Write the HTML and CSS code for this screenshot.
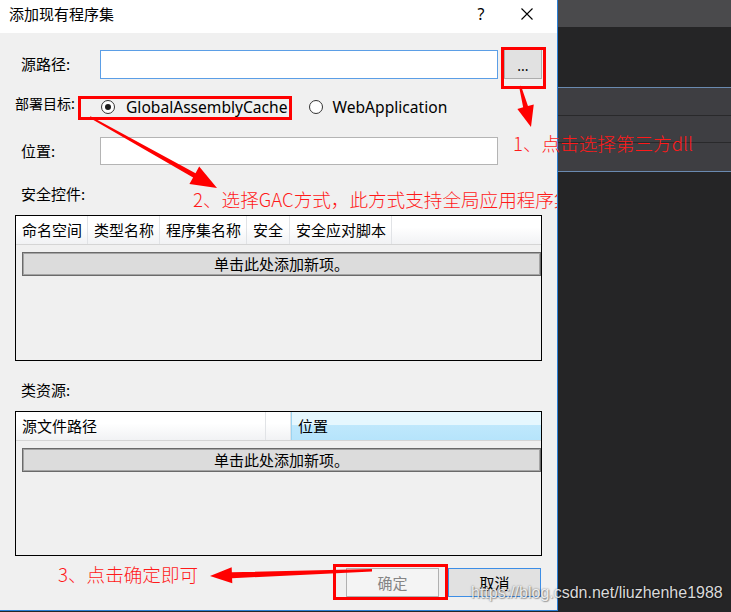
FILE: index.html
```html
<!DOCTYPE html>
<html lang="zh-CN">
<head>
  <meta charset="UTF-8" />
  <title>添加现有程序集</title>
  <link rel="stylesheet" href="styles.css">
</head>
<body>
  <div class="screen">

    <!-- 对话框 -->
    <div class="dialog">
      <div class="title-bar">
        <span class="title">添加现有程序集</span>
        <span class="title-help">?</span>
        <span class="title-close">
          <svg width="12" height="12" viewBox="0 0 12 12">
            <path d="M0.5 0.5 L11.5 11.5 M11.5 0.5 L0.5 11.5" stroke="#000" stroke-width="1.1" fill="none"/>
          </svg>
        </span>
      </div>

      <div class="dialog-body">
        <div class="form-row row-path">
          <label class="label">源路径:</label>
          <input class="text-input" type="text">
          <button class="browse-button">...</button>
        </div>

        <div class="form-row row-target">
          <label class="label label-target">部署目标:</label>
          <div class="radio-group">
            <span class="radio checked"></span>
            <span class="radio-text">GlobalAssemblyCache</span>
            <span class="radio radio-second"></span>
            <span class="radio-text radio-text-second">WebApplication</span>
          </div>
        </div>

        <div class="form-row row-location">
          <label class="label">位置:</label>
          <input class="text-input" type="text">
        </div>

        <!-- 安全控件 -->
        <div class="section-label">安全控件:</div>
        <div class="grid-box">
          <div class="grid-header">
            <div class="col-head col-ns">命名空间</div>
            <div class="col-head col-type">类型名称</div>
            <div class="col-head col-asm">程序集名称</div>
            <div class="col-head col-safe">安全</div>
            <div class="col-head col-script">安全应对脚本</div>
            <div class="col-head col-fill"></div>
          </div>
          <div class="add-row">单击此处添加新项。</div>
        </div>

        <!-- 类资源 -->
        <div class="section-label">类资源:</div>
        <div class="grid-box grid-resources">
          <div class="grid-header">
            <div class="col-head col-src">源文件路径</div>
            <div class="col-head col-gap"></div>
            <div class="col-head col-fill col-active">位置</div>
          </div>
          <div class="add-row">单击此处添加新项。</div>
        </div>

        <div class="button-row">
          <button class="dialog-button btn-ok">确定</button>
          <button class="dialog-button btn-cancel">取消</button>
        </div>
      </div>

      <div class="note note-2">2、选择GAC方式，此方式支持全局应用程序集</div>
    </div>

    <!-- 右侧背景窗口 -->
    <div class="side">
      <div class="side-tab"></div>
      <div class="side-space"></div>
      <div class="side-list">
        <div class="side-row side-row-first"></div>
        <div class="side-row side-row-mid"></div>
        <div class="side-row side-row-last"></div>
      </div>
    </div>

    <!-- 标注 -->
    <div class="mark-box mark-path"></div>
    <div class="mark-box mark-radio"></div>
    <div class="mark-box mark-ok"></div>

    <svg class="arrows" width="731" height="612" viewBox="0 0 731 612">
      <polygon fill="#ff0000" points="519.03,86.26 523.15,107.36 517.35,108.91 531,127 533.77,104.51 527.98,106.06 520.97,85.74"/>
      <polygon fill="#ff0000" points="89.51,117.87 193.08,177.49 189.42,184.04 217,188 199.18,166.58 195.52,173.13 90.49,116.13"/>
      <polygon fill="#ff0000" points="371.93,569 231.87,572.19 231.68,567.2 210,576 232.28,583.18 232.09,578.19 372.07,571.5"/>
    </svg>

    <div class="note note-1">1、点击选择第三方dll</div>
    <div class="note note-3">3、点击确定即可</div>

    <div class="watermark">https://blog.csdn.net/liuzhenhe1988</div>
  </div>
</body>
</html>
```

FILE: styles.css
```css
body {
  margin: 0;
  background: #252526;
  font-family: "Noto Sans", "Noto Sans CJK SC", sans-serif;
  color: #000;
}
.screen {
  position: relative;
  display: flex;
  width: 731px;
  height: 612px;
  overflow: hidden;
}

/* 对话框 */
.dialog {
  position: relative;
  flex: none;
  width: 557px;
  height: 610px;
  border-right: 1px solid #2c7fd4;
  border-bottom: 1px solid #2c7fd4;
  background: #f0f0f0;
  overflow: hidden;
}
.title-bar {
  display: flex;
  align-items: flex-start;
  height: 33px;
  box-sizing: border-box;
  padding: 4px 7px 0 9px;
  background: #fff;
}
.title {
  flex: 1;
  font-family: "Noto Sans CJK SC", sans-serif;
  font-size: 15px;
  line-height: 20px;
}
.title-help {
  width: 46px;
  text-align: center;
  font-size: 16px;
  line-height: 20px;
}
.title-close {
  display: flex;
  align-items: center;
  justify-content: center;
  width: 46px;
  height: 20px;
}

.dialog-body { padding: 16px 15px 0 15px; }
.form-row { display: flex; align-items: flex-start; }
.label {
  flex: none;
  width: 85px;
  box-sizing: border-box;
  padding-left: 6px;
  font-family: "Noto Sans CJK SC", sans-serif;
  font-size: 15px;
}
.text-input {
  box-sizing: border-box;
  width: 398px;
  margin: 0;
  padding: 0 3px;
  border: 1px solid #b4b4b4;
  background: #fff;
  font: inherit;
  outline: none;
}
.row-path { height: 30px; }
.row-path .label { line-height: 30px; }
.row-path .text-input {
  height: 29px;
  margin-top: 1px;
  border-color: #5b9ee6;
}
.browse-button {
  width: 38px;
  height: 30px;
  margin-left: 6px;
  padding: 4px 0 0;
  border: 1px solid #adadad;
  background: #e1e1e1;
  font-family: "Noto Sans", sans-serif;
  font-size: 14px;
  line-height: 1;
}

.row-target { height: 24px; margin-top: 16px; }
.label-target { padding-left: 0; font-size: 14px; line-height: 16px; }
.radio-group { display: flex; align-items: center; height: 24px; }
.radio {
  position: relative;
  flex: none;
  width: 14px;
  height: 14px;
  box-sizing: border-box;
  margin-left: 1px;
  border: 1px solid #333;
  border-radius: 50%;
  background: #fff;
}
.radio.checked::after {
  content: "";
  position: absolute;
  left: 3px;
  top: 3px;
  width: 6px;
  height: 6px;
  border-radius: 50%;
  background: #1b1b1b;
}
.radio-text { margin-left: 11px; font-size: 15.6px; white-space: nowrap; }
.radio-second { margin-left: 21px; }
.radio-text-second { margin-left: 10px; }

.row-location { height: 28px; margin-top: 18px; }
.row-location .label { line-height: 28px; }
.row-location .text-input { height: 28px; }

.section-label {
  margin-top: 19px;
  padding-left: 6px;
  font-family: "Noto Sans CJK SC", sans-serif;
  font-size: 15px;
  line-height: 20px;
}

/* 列表 */
.grid-box {
  height: 146px;
  box-sizing: border-box;
  margin-top: 11px;
  border: 1px solid #000;
  background: #f0f0f0;
}
.grid-resources { height: 145px; }
.grid-header {
  display: flex;
  height: 29px;
  box-sizing: border-box;
  border-bottom: 1px solid #d5d5d5;
  background: linear-gradient(#fff, #fff 40%, #f1f2f4);
}
.col-head {
  flex: none;
  box-sizing: border-box;
  padding-left: 6px;
  border-right: 1px solid #e1e3e6;
  font-family: "Noto Sans CJK SC", sans-serif;
  font-size: 15px;
  line-height: 28px;
  white-space: nowrap;
}
.col-ns     { width: 72px; }
.col-type   { width: 72px; }
.col-asm    { width: 87px; }
.col-safe   { width: 43px; }
.col-script { width: 102px; }
.col-src    { width: 250px; }
.col-gap    { width: 25px; }
.col-fill   { flex: 1; border-right: none; }
.col-active {
  border-left: 1px solid #9bd4f1;
  background: linear-gradient(#e5f7fe, #e5f7fe 45%, #bfe8fc 45%, #b6e4fb);
}
.add-row {
  height: 24px;
  box-sizing: border-box;
  margin: 7px 0 0 6px;
  border: 1px solid #6a6a6a;
  box-shadow: inset 0 0 0 1px #a4a4a4;
  background: #dcdcdc;
  text-align: center;
  font-family: "Noto Sans CJK SC", sans-serif;
  font-size: 15px;
  line-height: 22px;
}

.button-row {
  display: flex;
  justify-content: flex-end;
  gap: 9px;
  margin: 12px 1px 0 0;
}
.dialog-button {
  width: 93px;
  height: 29px;
  box-sizing: border-box;
  padding: 0;
  font-family: "Noto Sans CJK SC", sans-serif;
  font-size: 15px;
}
.btn-ok { border: 1px solid #b0b0b0; background: #f4f4f4; color: #858585; }
.btn-cancel { border: 1px solid #3d8ee6; background: #e1e1e1; color: #000; }

/* 右侧窗口 */
.side {
  flex: 1;
  display: flex;
  flex-direction: column;
  background: #252526;
}
.side-tab { height: 27px; background: #4a4a4c; }
.side-space { height: 60px; }
.side-list {
  border-top: 1px solid #6a8ab0;
  border-bottom: 1px solid #6a8ab0;
}
.side-row { box-sizing: border-box; background: #3e3e42; }
.side-row-first { height: 27px; }
.side-row-mid { height: 27px; border-top: 1px solid #29292b; }
.side-row-last { height: 29px; border-top: 1px solid #29292b; }

/* 标注 */
.mark-box {
  position: absolute;
  box-sizing: border-box;
  border: 3px solid #ff0000;
}
.mark-path  { left: 501px; top: 47px;  width: 45px;  height: 42px; }
.mark-radio { left: 78px;  top: 96px;  width: 214px; height: 24px; }
.mark-ok    { left: 333px; top: 564px; width: 115px; height: 36px; }
.arrows { position: absolute; left: 0; top: 0; pointer-events: none; }
.note {
  position: absolute;
  color: #ff1a1a;
  font-family: "Noto Sans CJK SC", sans-serif;
  font-size: 18.6px;
  font-weight: 300;
  line-height: 24px;
  white-space: nowrap;
}
.note-1 { left: 513px; top: 131px; }
.note-2 { left: 193px; top: 187px; }
.note-3 { left: 58px;  top: 562px; }
.watermark {
  position: absolute;
  left: 471px;
  top: 583px;
  color: rgba(255, 255, 255, 0.85);
  text-shadow: 0 0 2px rgba(0, 0, 0, 0.55), 1px 1px 1px rgba(0, 0, 0, 0.25);
  font-family: "Liberation Sans", sans-serif;
  font-size: 16px;
  line-height: 20px;
  white-space: nowrap;
}
```
